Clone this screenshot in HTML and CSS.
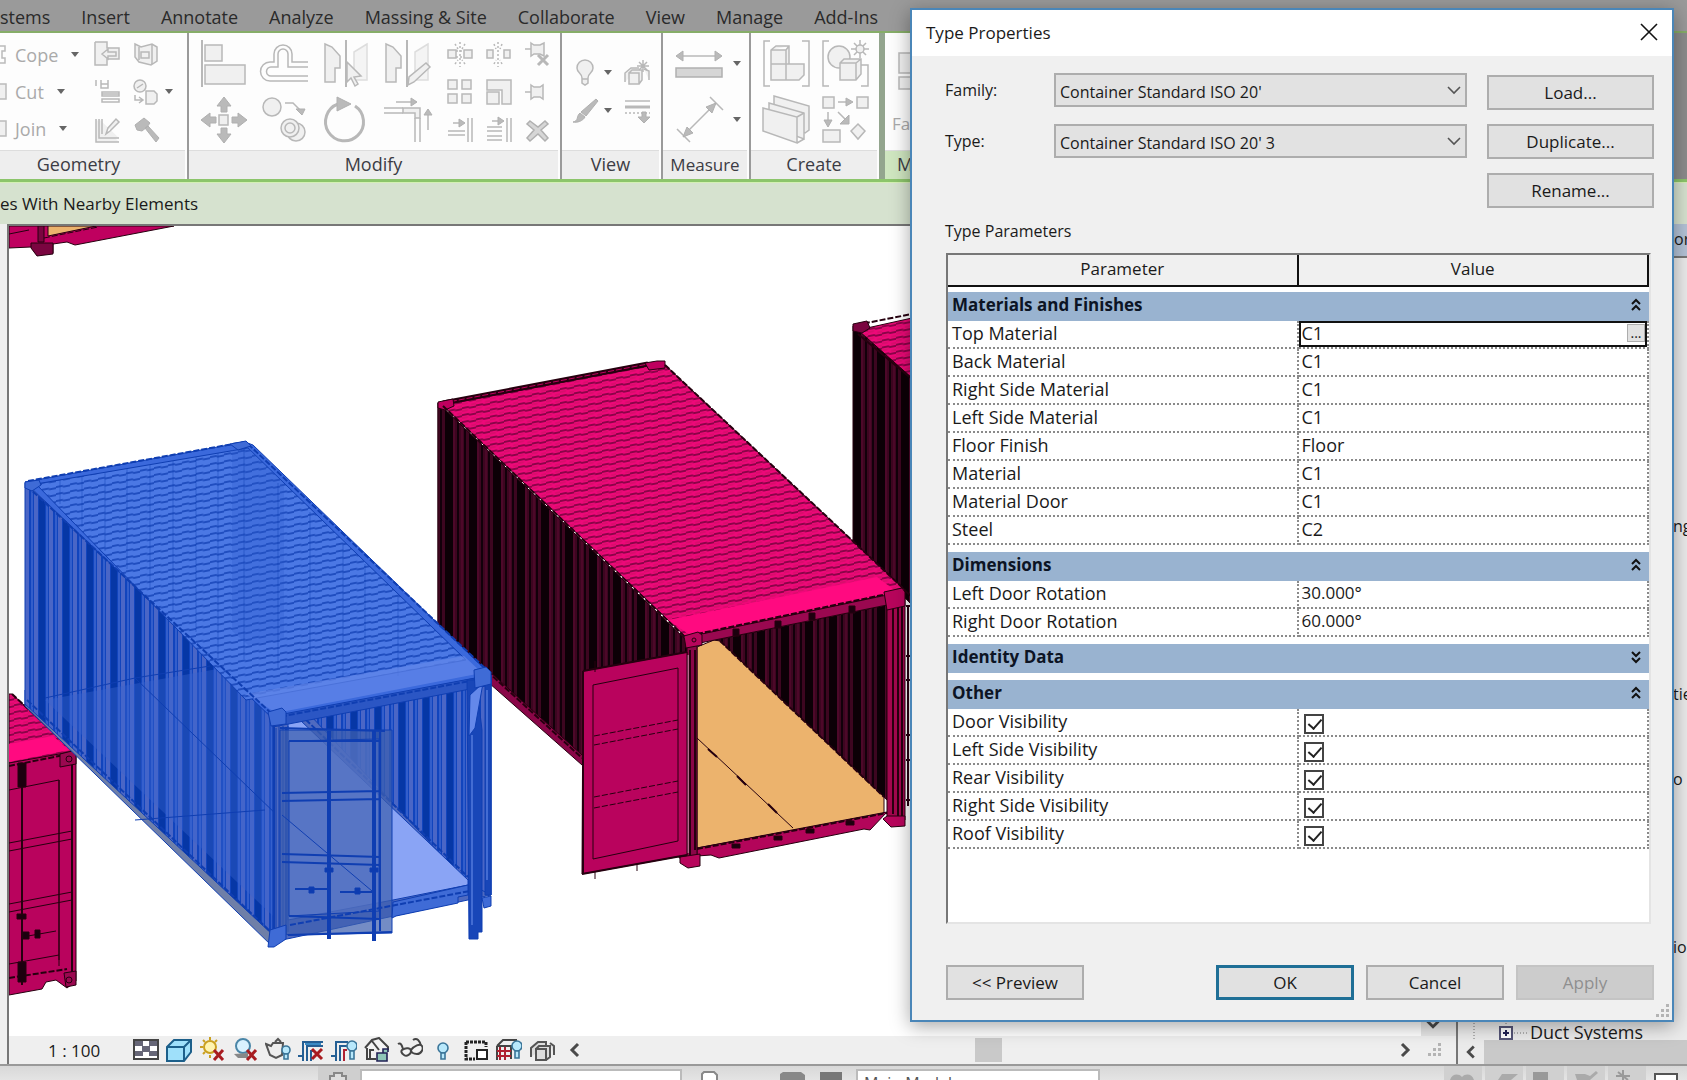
FILE: index.html
```
<!DOCTYPE html>
<html lang="en">
<head>
    <meta charset="UTF-8">
    <meta name="viewport" content="width=device-width, initial-scale=1.0">
    <title>Type Properties</title>
    <link rel="stylesheet" href="styles.css">
</head>
<body>
    <div class="app">
        <nav class="tabs">
            <a class="tab" href="#">stems</a>
            <a class="tab" href="#">Insert</a>
            <a class="tab" href="#">Annotate</a>
            <a class="tab" href="#">Analyze</a>
            <a class="tab" href="#">Massing &amp; Site</a>
            <a class="tab" href="#">Collaborate</a>
            <a class="tab" href="#">View</a>
            <a class="tab" href="#">Manage</a>
            <a class="tab" href="#">Add-Ins</a>
            <a class="tab" href="#">Modify</a>
        </nav>

        <div class="ribbon">
            <section class="panel geometry">
                <div class="tools">
                    <div class="text-tools">
                        <button class="tool"><svg width="8" height="25"><path d="M0 4h5v5h-3v7h3v5H0"/></svg>Cope<i class="arrow"></i></button>
                        <button class="tool"><svg width="8" height="25"><path class="f" d="M0 5h6v15H0"/></svg>Cut<i class="arrow"></i></button>
                        <button class="tool"><svg width="8" height="25"><path class="f" d="M0 5h6v15H0"/></svg>Join<i class="arrow"></i></button>
                    </div>
                    <div class="icons small two">
                        <svg viewBox="0 0 26 26"><path class="f" d="M1 1h12v6h4M1 1v23h12v-6h12V7h-8"/><path class="f" d="M8 13l6-5v3h8v4h-8v3z"/></svg>
                        <svg viewBox="0 0 26 26"><path class="f" d="M2 3l6 3 11-3 5 3v14l-6 4-12-3-4-5zM6 6v13M19 4v19M8 11h8v6H8z"/></svg>
                        <svg viewBox="0 0 26 26"><path d="M7 1v8h7V1M7 5h7M2 1v6M8 13h17v4H8zM8 20h17v3H8zM8 15h17" /></svg>
                        <svg viewBox="0 0 26 26"><circle class="f" cx="7" cy="7" r="6"/><path class="f" d="M4 9l6-4M13 12h8l3 3v7l-3 3h-8z"/><path d="M2 16v5h7M6 18l4 3-4 3"/></svg>
                        <svg viewBox="0 0 26 26"><path class="f" d="M2 2v23h23M5 2v19h20M8 2v15M12 17l2-6L22 2l3 3-9 9z"/></svg>
                        <svg viewBox="0 0 26 26"><path class="g" d="M2 8l9-7 6 5-3 4-5 4-5-1zM12 11l3-2 11 12-3 4z"/></svg>
                    </div>
                    <i class="arrow"></i>
                </div>
                <div class="label">Geometry</div>
            </section>

            <section class="panel modify">
                <div class="tools">
                    <div class="icons big four">
                        <svg viewBox="0 0 46 48"><path d="M1 0v47" class="w"/><path class="f" d="M4 5h17v16H4zM4 25h40v19H4z"/></svg>
                        <svg viewBox="0 0 46 48"><path d="M46 22H30V14a9 9 0 0 0-18 0v8H8a9 9 0 0 0 0 19h38"/><path d="M46 27H26V14a5 5 0 0 0-10 0v13H9a4 4 0 0 0 0 9h37"/></svg>
                        <svg viewBox="0 0 46 48"><path class="f" d="M2 4l7 3 8 9v12h-5v14H2z"/><path d="M23 0v47" class="w"/><path class="p" d="M44 4L31 12v28h13z"/><path class="f" d="M24 22l14 14-7 1 4 7-3 2-4-8-4 4z"/></svg>
                        <svg viewBox="0 0 46 48"><path class="f" d="M2 4l7 3 8 9v12h-5v14H2z"/><path d="M23 0v47" class="w"/><path class="p" d="M44 4L31 12v28h13z"/><path class="f" d="M24 45l1-8 17-14 4 4-16 15z"/></svg>
                        <svg viewBox="0 0 46 48"><path class="g" d="M23 1l7 9h-4v6h-6v-6h-4zM23 47l7-9h-4v-6h-6v6h-4zM0 24l9-7v4h6v6H9v4zM46 24l-9-7v4h-6v6h6v4z"/><path class="f" d="M18 19h9v10h-9z"/></svg>
                        <svg viewBox="0 0 46 48"><circle class="f" cx="10" cy="11" r="9"/><circle class="f" cx="34" cy="36" r="9"/><circle class="f" cx="28" cy="32" r="9"/><circle cx="28" cy="32" r="5"/><path d="M23 7h8l8 8"/><path class="g" d="M34 13h9l-3 6z"/></svg>
                        <svg viewBox="0 0 46 48"><path class="ww" d="M32 10a19 19 0 1 1-17-2"/><path class="g" d="M14 1l14 7-14 7z"/></svg>
                        <svg viewBox="0 0 46 48"><path d="M0 12h19M0 17h19M12 6h20M31 46V22M36 46V22M44 34V18" /><path class="f" d="M19 12h17v10h-5v-5H19z"/><path class="g" d="M27 2l6 4-6 4zM40 19l4-6 4 6z"/></svg>
                    </div>
                    <div class="icons small three">
                        <svg viewBox="0 0 26 26"><path class="f" d="M1 9h8v8H1zM17 9h8v8h-8z"/><path class="d" d="M13 1v25M9 10h8M9 16h8M8 3l3 5M18 3l-3 5M8 23l3-4M18 23l-3-4"/></svg>
                        <svg viewBox="0 0 26 26"><path class="f" d="M1 9h6v8H1zM18 9h6v8h-6z"/><path class="d" d="M12 1v25M8 3l2 5M16 3l-2 5M8 23l2-4M16 23l-2-4"/></svg>
                        <svg viewBox="0 0 26 26"><path class="f" d="M6 2l3 2h6l4-2v13l-4-2H9l-3 2zM0 8h6"/><path class="ww" d="M13 14l10 10M23 14L13 24"/></svg>
                        <svg viewBox="0 0 26 26"><path class="f" d="M1 1h9v9H1zM15 1h9v9h-9zM1 15h9v9H1zM15 15h9v9h-9z"/></svg>
                        <svg viewBox="0 0 26 26"><path class="f" d="M1 1h24v24H16V11H1z"/><path class="f" d="M1 13h12v12H1z"/></svg>
                        <svg viewBox="0 0 26 26"><path class="f" d="M6 6l3 2h6l3-2v14l-3-2H9l-3 2zM0 13h6"/></svg>
                        <svg viewBox="0 0 26 26"><path d="M1 14h17M1 18h17M6 6h8M21 1v24M25 1v24"/><path class="g" d="M12 2l6 4-6 4z"/></svg>
                        <svg viewBox="0 0 26 26"><path d="M1 10h15M1 14h15M1 19h15M1 23h15M6 4h8M21 1v24M25 1v24"/><path class="g" d="M12 0l6 4-6 4z"/></svg>
                        <svg viewBox="0 0 26 26"><path class="g light" d="M5 4l8 6 7-6 3 3-7 6 7 8-3 3-7-7-8 7-3-3 7-8-7-6z"/></svg>
                    </div>
                </div>
                <div class="label">Modify</div>
            </section>

            <section class="panel view">
                <div class="tools">
                    <div class="icons small arrows">
                        <svg viewBox="0 0 26 26"><path class="f" d="M10 18c0-5-5-5-5-10a8 8 0 0 1 16 0c0 5-5 5-5 10v5l-3 2-3-2zM10 19h6"/></svg>
                        <i class="arrow"></i>
                        <svg viewBox="0 0 26 26"><path class="f" d="M5 13h10v11H5zM5 13l3-3h10v10l-3 4M1 22v-9l6-5h8M25 20v-9l-5-2"/><path d="M19 0v12M13 6h12M15 2l8 8M23 2l-8 8"/></svg>
                        <svg viewBox="0 0 26 26"><path class="g" d="M1 24c6-1 3-6 7-9l5 4c-2 4-8 6-12 5zM9 14L24 1l2 2-12 15z"/></svg>
                        <i class="arrow"></i>
                        <svg viewBox="0 0 26 26"><path d="M1 3h25"/><path class="ww" d="M1 9h25"/><path class="d" d="M1 15h25"/><path class="g" d="M18 14h4v5h4l-6 6-6-6h4z"/></svg>
                    </div>
                </div>
                <div class="label">View</div>
            </section>

            <section class="panel measure">
                <div class="tools">
                    <div class="icons big arrows2">
                        <svg viewBox="0 0 46 48"><path d="M3 16h40"/><path class="g" d="M0 16l7-5v10zM46 16l-7-5v10z"/><path class="g light" d="M0 28h46v9H0z"/></svg>
                        <i class="arrow"></i>
                        <svg viewBox="0 0 46 48"><path d="M9 38l28-28M34 1l13 13M1 33l13 13"/><path class="g" d="M40 7l-10 4 6 6zM7 41l10-4-6-6z"/></svg>
                        <i class="arrow"></i>
                    </div>
                </div>
                <div class="label">Measure</div>
            </section>

            <section class="panel create">
                <div class="tools">
                    <div class="icons big two-wide">
                        <svg viewBox="0 0 46 48"><path d="M7 1H1v45h6M39 1h7v45h-7"/><path class="f" d="M8 10l5-4h13v18h15v11l-5 5H8zM8 24h18M23 10v30M8 10h15l3-4"/></svg>
                        <svg viewBox="0 0 46 48"><path d="M7 1H1v45h6M39 25h7v21h-7"/><circle class="f" cx="17" cy="17" r="11"/><path class="f" d="M18 23l4-4h17v15l-5 6H18zM18 23h16v17M34 23l5-4"/><path d="M38 0v18M29 9h18M32 3l12 12M44 3L32 15"/><circle class="f" cx="38" cy="9" r="4"/></svg>
                        <svg viewBox="0 0 46 48"><path class="f" d="M11 0l35 10v24l-4 3L11 26z"/><path class="f" d="M6 7l35 10v26L6 30z"/><path class="f" d="M0 12l34 9v26L0 35zM34 21l7-4M34 47l7-4"/></svg>
                        <svg viewBox="0 0 46 48"><path class="f" d="M1 1h11v11H1zM35 1h11v11H35zM1 34h17v12H1zM36 28l7 7-7 8-7-8z"/><path d="M16 6h10M6 16v10M16 16l9 9"/><path class="g" d="M24 2l7 4-7 4zM2 24h8l-4 7zM27 19v9h-9z"/></svg>
                    </div>
                </div>
                <div class="label">Create</div>
            </section>
            <section class="panel mode">
                <div class="tools">
                    <div class="icons big mode-icons">
                        <svg viewBox="0 0 46 48"><path class="f" d="M1 5h30v20H1zM1 29h30v12H1z"/></svg>
                        <span>Family</span>
                    </div>
                </div>
                <div class="label">Mode</div>
            </section>
        </div>

        <div class="options-bar">es With Nearby Elements</div>

        <div class="workspace">
            <main class="drawing">
                <div class="canvas-row">
                    <div class="canvas">
                        <svg class="scene" viewBox="9 226 903 811" width="903" height="811">
                            <defs>
                                <pattern id="roofPink" width="14" height="7" patternUnits="userSpaceOnUse" patternTransform="skewY(-11)">
                                    <rect width="14" height="7" fill="#ee0879"/>
                                    <path d="M0 1h7M7 2h7" stroke="#6b0238" stroke-width="1.4"/>
                                    <path d="M0 4h6M9 6h5" stroke="#c4145f"/>
                                </pattern>
                                <pattern id="roofBlue" width="14" height="7" patternUnits="userSpaceOnUse" patternTransform="skewY(-11)">
                                    <rect width="14" height="7" fill="#4b78e4"/>
                                    <path d="M0 1h7M7 2h7" stroke="#1240b4" stroke-width="1.4"/>
                                </pattern>
                                <pattern id="ribPink" width="24" height="20" patternUnits="userSpaceOnUse">
                                    <rect width="24" height="20" fill="#3d0620"/>
                                    <path d="M2 0v20M9 0v20" stroke="#12000a" stroke-width="2"/>
                                    <path d="M17 0v20" stroke="#0c0006" stroke-width="8"/>
                                    <path d="M22 0v20M6 0v20" stroke="#5d0a32"/>
                                </pattern>
                                <pattern id="ribBlue" width="24" height="20" patternUnits="userSpaceOnUse">
                                    <rect width="24" height="20" fill="#1144bd"/>
                                    <path d="M3 0v20M12 0v20" stroke="#4a66c6" stroke-width="4"/>
                                    <path d="M18 0v20" stroke="#0637a6" stroke-width="6"/>
                                    <path d="M8 0v20M23 0v20" stroke="#5478da"/>
                                </pattern>
                            </defs>

                            <!-- far left, cut by the view edge -->
                            <g class="edge">
                                <path fill="#bf005f" d="M9 226H174L75 245l-8-3-14 2V253l-16 2-6-8-22 1z"/>
                                <path fill="#ecb36d" d="M48 226H96L48 236z"/>
                                <path fill="#7a0540" d="M31 243h22v11l-16 2-6-8zM38 226h6v16h-6z"/>
                                <path class="dash" d="M44 238l54-11"/>
                                <path d="M9 234l20-4"/>
                            </g>

                            <!-- right container -->
                            <g class="edge">
                                <path fill="url(#ribPink)" d="M853 326L912 377V605L853 545z"/>
                                <path fill="url(#roofPink)" d="M858 330l54-12v60z"/>
                                <path class="bold dash" d="M856 325l56-11"/>
                                <path fill="#7a0540" d="M853 324l14-3 3 7-8 5-9-2z"/>
                                <path class="bold" d="M858 334l54 45M858 547l54 50"/>
                                <path class="bold" d="M906 606h6M906 656h6M906 680h6M906 735h6M906 760h6M906 800h6M908 606v200"/>
                            </g>

                            <!-- middle container -->
                            <g class="edge">
                                <path fill="#8a0648" d="M438 403v235l144 127 105 100V641z"/>
                                <path fill="url(#ribPink)" d="M438 403v222l144 130 105 100V641z"/>
                                <path class="bold dash" d="M440 628l142 130"/>
                                <path fill="url(#roofPink)" d="M442 405L663 363l242 227-216 50z"/>
                                <path fill="#ff0a80" stroke="none" d="M668 620l209-43 20 15-207 43z"/>
                                <path class="heavy" d="M443 403l205-39"/>
                                <path stroke="#bf005f" class="dash" d="M443 403l205-39"/>
                                <path fill="#bf005f" d="M438 402l15-3 1 7-9 4-7-2zM645 363l12-2h8v7l-16 2z"/>
                                <path class="bold dash" d="M443 406L688 640M665 365L905 590"/>
                                <path fill="url(#ribPink)" d="M715 640l172-35v195z"/>
                                <path fill="#ecb36d" d="M697 647l17-7 6 1 164 156v17l-187 34z"/>
                                <path class="bold dash" d="M720 641l164 156"/>
                                <path d="M697 738l96 90"/>
                                <path class="bold" d="M708 749l9 8M737 776l9 9M768 804l9 9"/>
                                <path fill="#9a0850" d="M697 635l190-40v10l-187 38z"/>
                                <path class="bold dash" d="M697 634l190-40"/>
                                <path fill="#1c000e" d="M733 629h6v7h-6zM775 621h6v7h-6zM809 613h6v7h-6zM849 606h6v7h-6z"/>
                                <path fill="#a3074f" d="M887 593h18v227h-18z"/>
                                <path class="bold" d="M893 606v208M902 600v218M898 600v216"/>
                                <path fill="#b8055c" d="M884 592l18-4 3 4v14l-18 4zM887 816h18v10l-14 1-8-8z"/>
                                <path fill="#b3055a" d="M697 848l190-36-17 18-6-1-145 29-8-3-14 1z"/>
                                <path class="bold dash" d="M697 849l190-36"/>
                                <path fill="#1c000e" d="M732 844h8v4h-8zM774 836h8v4h-8zM806 829h8v4h-8zM846 821h8v4h-8z"/>
                                <path fill="#8a0648" d="M687 641h10v216h-10z"/>
                                <path class="bold" d="M690 650v205M695 650v200"/>
                                <path stroke="#e6c9d6" d="M688 655v198"/>
                                <path fill="#b8055c" d="M684 636l14-4 4 3v10l-16 3zM680 857l20-3v12l-12 2-8-5z"/>
                                <circle cx="694" cy="640" r="2"/>
                                <path fill="#b9035d" d="M583 671l104-19v203l-105 19z"/>
                                <path class="bold" d="M583 671v203M583 671l104-19M582 874l105-19"/>
                                <path d="M593 685l85-17v173l-85 18z"/>
                                <path class="dash" d="M594 736l84-16M594 745l84-16M594 797l84-16M594 808l84-16"/>
                                <path d="M595 661v11M595 872v7M637 864v7"/>
                            </g>

                            <!-- bottom left container -->
                            <g class="edge">
                                <path fill="url(#roofPink)" d="M9 694l3 0 65 60-68 13z"/>
                                <path fill="#ff0a80" stroke="none" d="M9 744l44-8 16 14-60 12z"/>
                                <path class="bold dash" d="M12 694l64 59"/>
                                <path fill="#b9035d" d="M9 763l67-12v230l-9 7-11-8-10 2-4 7-33 6z"/>
                                <path class="bold" d="M22 763v222M72 763v214"/>
                                <path class="bold dash" d="M9 766l60-12M9 978l58-9"/>
                                <path d="M9 790l50-10v186M9 843l63-12M9 851l63-12M9 904l63-12M9 912l63-12M9 964l50-9M59 780v180M28 936l28-5"/>
                                <path fill="#1c000e" d="M18 763h8v24h-8zM18 962h8v20h-8zM17 914h9v5h-9zM23 932h6v7h-6zM35 930h5v8h-5z"/>
                                <path fill="#9a0850" d="M60 754l16-4v14l-16 3zM64 973l12-2v14l-10 2z"/>
                                <circle cx="69" cy="759" r="3"/>
                                <circle cx="69" cy="980" r="3"/>
                            </g>

                            <!-- selected container -->
                            <g class="edge sel">
                                <path fill="#6f7fa8" d="M25 706L273 947v-18L25 690z"/>
                                <path fill="url(#ribBlue)" d="M25 483v221L273 935V716z"/>
                                <path fill="#3a64d0" fill-opacity=".4" stroke="none" d="M45 700l200-36 28 52v200z"/>
                                <path d="M135 678l145 140M45 698l90-20 75-12M135 820l130-10"/>
                                <path class="bold dash" d="M27 700l246 234"/>
                                <path fill="#4f6ac0" d="M273 716l218-41v220l-218 47z"/>
                                <path fill="url(#ribBlue)" d="M310 715l181-36v216l-23-12z"/>
                                <path fill="#8aa4f5" d="M288 722l12-2 168 160v5l-75 15-105 20z"/>
                                <path class="bold dash" d="M300 714l168 163"/>
                                <path fill="#3b69dc" d="M25 482l220-40 8 3 238 230-218 44z"/>
                                <path fill="url(#roofBlue)" d="M36 484l212-36 218 212-220 40z"/>
                                <path fill="#2b58cc" fill-opacity=".28" stroke="none" d="M232 450l16-3 36 36v156l-36 6-16-14z"/>
                                <path class="thin" d="M60 480v24M82 477v50M105 473v78M127 469v100M150 465v125M173 461v150M196 457v175M218 453v205M244 449v210M278 483v185M310 512v150M343 543v135M365 564v110M398 596v80"/>
                                <path fill="#6488ea" stroke="none" fill-opacity=".7" d="M246 694l218-38 18 17-206 40z"/>
                                <path class="bold dash" d="M27 486l245 228M248 444l242 229M28 481l216-39"/>
                                <path fill="#2b56c4" d="M273 716l218-41v10l-218 42z"/>
                                <path class="bold dash" d="M273 718l218-41"/>
                                <path d="M276 728v212M283 726v212M288 726v206M279 726v214"/>
                                <path class="bold" d="M274 722v220M286 727v206"/>
                                <path fill="#3f5fae" fill-opacity=".72" d="M280 730h112v203l-104 2-8-5z"/>
                                <path fill="#5b78c8" fill-opacity=".5" d="M289 741l90-2v172l-90 5z"/>
                                <path class="wide" d="M329 731v208M374 731v210"/>
                                <path class="bold" d="M380 731v200M280 728l105 3M282 793l98-2M282 801l98-2M282 854l98 3M282 862l98 3M289 741h90M289 916l90 3M295 889h34M340 892h32M288 935l104-3"/>
                                <path fill="#0d3bb0" d="M325 868h8v4h-8zM370 868h8v4h-8zM309 887h5v6h-5zM355 888h5v6h-5z"/>
                                <path d="M282 815l90 76"/>
                                <path fill="#3f6bd6" d="M393 902l75-17v10l-10 2v6l-62 13-4 2z"/>
                                <path class="bold dash" d="M290 925l180-34"/>
                                <path fill="#1846b8" d="M467 680h9l6 50v202h-4v7h-9zM485 680h6v215h-6z"/>
                                <path stroke="#6f92ee" d="M472 735v190M487 690v190"/>
                                <path fill="#6488ea" d="M470 695l13-12-8 45-6 8z"/>
                                <path fill="#3f6bd6" d="M268 712l14-4 4 4v12l-15 2zM270 930l16-5v14l-12 8h-6zM474 670l12-3 5 5v12l-16 4zM482 898l9-2v10l-7 2zM230 444l16-3 5 5-13 4zM25 482l14-2 2 5-9 6-7-3z"/>
                            </g>
                        </svg>
                    </div>
                    <div class="vscroll"><svg viewBox="0 0 26 26" width="24" height="24"><path class="chev" d="M7 10l6 6 6-6"/></svg></div>
                </div>
                <div class="view-bar">
                    <span class="scale">1 : 100</span>
                    <div class="view-icons">
                        <svg viewBox="0 0 26 26"><path fill="#fff" stroke="#444" stroke-width="2" d="M1 3h24v19H1z"/><path fill="#667" d="M2 4h8v5H2zM16 4h8v5h-8zM9 9h8v6H9zM2 14h8v5H2zM16 14h8v5h-8z"/></svg>
                        <svg viewBox="0 0 26 26"><path fill="#9fe0fa" stroke="#1c5f8a" stroke-width="2" d="M1 10l7-7h17v12l-7 9H1zM1 10h17v14M18 10l7-7"/></svg>
                        <svg viewBox="0 0 26 26"><circle cx="11" cy="10" r="6" fill="#fff4b0" stroke="#caa020" stroke-width="2"/><path stroke="#caa020" stroke-width="2" d="M11 0v3M1 10h3M4 3l2 2M18 3l-2 2M4 17l2-2M11 18v3"/><path class="x" d="M15 13l9 10M24 13l-9 10"/></svg>
                        <svg viewBox="0 0 26 26"><circle cx="11" cy="9" r="7" fill="#d8f2ff" stroke="#4a86a8" stroke-width="2"/><path fill="#888" d="M2 17l14-1v5H6z"/><path class="x" d="M15 13l9 10M24 13l-9 10"/></svg>
                        <svg viewBox="0 0 26 26"><path fill="#eee" stroke="#555" stroke-width="2" d="M1 7l5 2 2-3h10l-1 12-6 3-6-3zM10 5l3-3 3 3"/><circle cx="21" cy="13" r="4" class="lamp"/><path class="lamp" d="M19 17h4v5h-4z"/></svg>
                        <svg viewBox="0 0 26 26"><path fill="none" stroke="#245f94" stroke-width="2" d="M5 24V5h20M9 24V9h16M13 24V14h3M0 19h4"/><path stroke="#3a8ac4" stroke-width="2" d="M7 7h16"/><path class="x" d="M14 12l10 10M24 12L14 22"/></svg>
                        <svg viewBox="0 0 26 26"><path fill="none" stroke="#245f94" stroke-width="2" d="M5 24V5h12M9 24V9h7M0 19h4"/><path fill="none" stroke="#b02030" stroke-width="2" d="M13 24V13h3"/><circle cx="21" cy="9" r="5" class="lamp"/><path class="lamp" d="M19 14h4v8h-4z"/></svg>
                        <svg viewBox="0 0 26 26"><path fill="#f4f4f4" stroke="#444" stroke-width="2" d="M1 11l7-8 7-2 9 9v3M3 11v11h9M8 4l7 9M6 22v-9h4"/><path fill="#8fc7b8" stroke="#225" stroke-width="1.6" d="M13 16h10v8H13zM19 16v-4h5v3"/></svg>
                        <svg viewBox="0 0 26 26"><path fill="none" stroke="#444" stroke-width="2" d="M1 7c3-2 4 2 5 5M16 3c4-3 7 1 8 6"/><path fill="#f4f4f4" stroke="#444" stroke-width="2" d="M5 13c4-3 9-2 9 1s-4 6-7 4-3-4-2-5zM14 13c3-4 9-7 11-4s-1 8-5 8-6-2-6-4z"/></svg>
                        <svg viewBox="0 0 26 26"><circle cx="13" cy="11" r="5" class="lamp"/><path class="lamp" d="M11 16h4v6h-4z"/></svg>
                        <svg viewBox="0 0 26 26"><path fill="none" stroke="#222" stroke-width="3" stroke-dasharray="3 1" d="M3 5h20M3 5v17h9M23 5v5"/><path fill="#fff" stroke="#222" stroke-width="2" d="M14 13h10v9H14z"/><circle cx="19" cy="17" r="2"/></svg>
                        <svg viewBox="0 0 26 26"><path fill="none" stroke="#444" stroke-width="2" d="M1 9l6-6h14M1 9h14v13M1 9v14"/><path fill="none" stroke="#b02030" stroke-width="2" d="M4 10v13M9 10v13M1 14h14M1 19h14"/><circle cx="21" cy="9" r="5" class="lamp"/><path class="lamp" d="M19 14h4v7h-4z"/></svg>
                        <svg viewBox="0 0 26 26"><path fill="#ddd" stroke="#555" stroke-width="2" d="M7 12h10v11H7zM7 12l3-3h11v11l-4 3M2 20v-9l7-6h8v4M25 18v-9l-4-3"/></svg>
                        <svg viewBox="0 0 26 26"><path class="chev" d="M16 7l-6 6 6 6"/></svg>
                    </div>
                    <div class="hscroll"><div class="thumb"></div></div>
                    <svg class="end-arrow" viewBox="0 0 26 26"><path class="chev" d="M10 7l6 6-6 6"/></svg>
                    <svg class="grip" viewBox="0 0 14 14"><path d="M10 0h3v3h-3zM5 5h3v3H5zM10 5h3v3h-3zM0 10h3v3H0zM5 10h3v3H5zM10 10h3v3h-3z"/></svg>
                </div>
            </main>

            <aside class="browser">
                <div class="browser-title">or</div>
                <ul class="tree">
                    <li>ng</li>
                    <li>tie</li>
                    <li>o</li>
                    <li>io</li>
                    <li class="node"><svg width="66" height="22" viewBox="0 0 66 22"><path stroke="#777" stroke-dasharray="1 2" fill="none" d="M10 0v22M42 0v6M50 13h14"/><path fill="#fff" stroke="#557" stroke-width="2" d="M36 7h12v12H36z"/><path stroke="#225" stroke-width="2" d="M39 13h6M42 10v6"/></svg>Duct Systems</li>
                </ul>
                <div class="tree-scroll">
                    <svg viewBox="0 0 26 26" width="26" height="24"><path class="chev" d="M16 7l-6 6 6 6"/></svg>
                    <div class="thumb"></div>
                </div>
            </aside>
        </div>

        <footer class="status">
            <div class="message"></div>
            <svg class="worksets" width="42" height="14"><path fill="#ddd" stroke="#888" stroke-width="2" d="M12 14v-4h4V7h8v3h4v4"/></svg>
            <div class="field workset"></div>
            <svg width="90" height="14"><path fill="#fff" stroke="#888" stroke-width="2" d="M20 14V8l2-2h10l3 3v5"/></svg>
            <svg width="40" height="14"><path fill="#888" d="M8 14V8l3-2h18l4 3v5z"/></svg>
            <svg width="44" height="14"><path fill="#777" d="M8 6h22v8H8z"/></svg>
            <div class="field model">Main Model</div>
            <div class="fill"></div>
            <svg class="sel-icon" width="38" height="14"><path fill="#aaa" d="M6 14c2-6 8-7 12-3 4-4 10-3 12 3z"/></svg>
            <svg class="sel-icon" width="38" height="14"><path fill="#aaa" d="M13 14l4-6h16l-7 6z"/></svg>
            <svg class="sel-icon" width="38" height="14"><path fill="#999" d="M7 6h15v8H7z"/></svg>
            <svg class="sel-icon" width="38" height="14"><path fill="#aaa" d="M8 8h10l5 2 6-5 2 2-8 7H10z"/></svg>
            <svg class="sel-icon" width="38" height="14"><path stroke="#999" stroke-width="2" d="M15 4v10M8 10h14M10 6l10 8"/></svg>
            <svg class="filter" width="38" height="14"><path fill="#fff" stroke="#555" stroke-width="2" d="M6 14V8h22v6"/></svg>
        </footer>
    </div>

    <div class="dialog" role="dialog" aria-labelledby="dlgTitle">
        <div class="titlebar">
            <h1 id="dlgTitle">Type Properties</h1>
            <button class="close" aria-label="Close"><svg width="18" height="18" viewBox="0 0 18 18"><path stroke="#111" stroke-width="1.6" d="M1 1l16 16M17 1L1 17"/></svg></button>
        </div>
        <div class="dialog-body">
            <div class="top">
                <div class="pickers">
                    <label for="family">Family:</label>
                    <div class="select">
                        <select id="family"><option>Container Standard ISO 20'</option></select>
                        <svg width="14" height="9" viewBox="0 0 14 9"><path d="M1 1l6 6 6-6"/></svg>
                    </div>
                    <label for="type">Type:</label>
                    <div class="select">
                        <select id="type"><option>Container Standard ISO 20' 3</option></select>
                        <svg width="14" height="9" viewBox="0 0 14 9"><path d="M1 1l6 6 6-6"/></svg>
                    </div>
                </div>
                <div class="side-buttons">
                    <button class="btn">Load...</button>
                    <button class="btn">Duplicate...</button>
                    <button class="btn">Rename...</button>
                </div>
            </div>
            <h2>Type Parameters</h2>
            <div class="grid">
                <table>
                    <thead>
                        <tr><th>Parameter</th><th>Value</th></tr>
                    </thead>
                    <tbody>
                        <tr class="gap"><td colspan="2"></td></tr>
                        <tr class="group"><th colspan="2"><div><span>Materials and Finishes</span><button aria-label="Collapse"><svg width="10" height="14" viewBox="0 0 10 14"><path d="M1 6l4-4 4 4M1 12l4-4 4 4"/></svg></button></div></th></tr>
                        <tr><td><label for="top">Top Material</label></td><td class="editing"><div><input id="top" type="text" value="C1"><button aria-label="Browse">...</button></div></td></tr>
                        <tr><td>Back Material</td><td>C1</td></tr>
                        <tr><td>Right Side Material</td><td>C1</td></tr>
                        <tr><td>Left Side Material</td><td>C1</td></tr>
                        <tr><td>Floor Finish</td><td>Floor</td></tr>
                        <tr><td>Material</td><td>C1</td></tr>
                        <tr><td>Material Door</td><td>C1</td></tr>
                        <tr><td>Steel</td><td>C2</td></tr>
                        <tr class="gap"><td colspan="2"></td></tr>
                        <tr class="group"><th colspan="2"><div><span>Dimensions</span><button aria-label="Collapse"><svg width="10" height="14" viewBox="0 0 10 14"><path d="M1 6l4-4 4 4M1 12l4-4 4 4"/></svg></button></div></th></tr>
                        <tr><td>Left Door Rotation</td><td class="number">30.000°</td></tr>
                        <tr><td>Right Door Rotation</td><td class="number">60.000°</td></tr>
                        <tr class="gap"><td colspan="2"></td></tr>
                        <tr class="group"><th colspan="2"><div><span>Identity Data</span><button aria-label="Expand"><svg width="10" height="14" viewBox="0 0 10 14"><path d="M1 2l4 4 4-4M1 8l4 4 4-4"/></svg></button></div></th></tr>
                        <tr class="gap"><td colspan="2"></td></tr>
                        <tr class="group"><th colspan="2"><div><span>Other</span><button aria-label="Collapse"><svg width="10" height="14" viewBox="0 0 10 14"><path d="M1 6l4-4 4 4M1 12l4-4 4 4"/></svg></button></div></th></tr>
                        <tr><td><label for="v1">Door Visibility</label></td><td><input id="v1" type="checkbox" checked></td></tr>
                        <tr><td><label for="v2">Left Side Visibility</label></td><td><input id="v2" type="checkbox" checked></td></tr>
                        <tr><td><label for="v3">Rear Visibility</label></td><td><input id="v3" type="checkbox" checked></td></tr>
                        <tr><td><label for="v4">Right Side Visibility</label></td><td><input id="v4" type="checkbox" checked></td></tr>
                        <tr><td><label for="v5">Roof Visibility</label></td><td><input id="v5" type="checkbox" checked></td></tr>
                    </tbody>
                </table>
            </div>
            <div class="actions">
                <button class="btn preview">&lt;&lt; Preview</button>
                <button class="btn ok">OK</button>
                <button class="btn">Cancel</button>
                <button class="btn" disabled>Apply</button>
            </div>
        </div>
        <svg class="grip corner" viewBox="0 0 14 14"><path d="M10 0h3v3h-3zM5 5h3v3H5zM10 5h3v3h-3zM0 10h3v3H0zM5 10h3v3H5zM10 10h3v3h-3z"/></svg>
    </div>
</body>
</html>
```

FILE: styles.css
```
* { box-sizing: border-box; }
body { margin: 0; font-family: "Open Sans", "Noto Sans", sans-serif; font-size: 17px; color: #1a1a1a; overflow: hidden; }
button, select, input { font: inherit; color: inherit; }
button { padding: 0; border: none; background: none; }
svg { display: block; flex: none; }
.app { display: flex; flex-direction: column; height: 100vh; background: #efefef; }

/* ribbon */
.tabs { display: flex; gap: 31px; height: 33px; line-height: 34px; font-size: 18px; background: #9a9a9a; border-bottom: 2px solid #86ad68; white-space: nowrap; flex: none; }
.tab { color: #2a2a2a; text-decoration: none; }
.ribbon { display: flex; height: 149px; background: #8c8c8c; border-bottom: 3px solid #8cc56b; flex: none; }
.panel { display: flex; flex-direction: column; background: #fdfdfd; border-right: 2px solid #9a9a9a; flex: none; }
.tools { display: flex; flex: 1; color: #aaa; }
.label { height: 29px; line-height: 27px; margin-right: 2px; text-align: center; font-size: 18px; background: #eee; border-top: 1px solid #ddd; color: #3c3c44; }
.geometry { width: 189px; }
.geometry .label { padding-right: 28px; }
.modify { width: 373px; }
.view { width: 101px; }
.measure { width: 88px; }
.measure .label { font-size: 17px; }
.create { width: 134px; border-right: 6px solid #93a58e; }
.mode { width: 120px; border-right: none; }
.mode .label { background: #cfe6c0; text-align: left; padding-left: 12px; }
.mode-icons { padding-left: 13px; gap: 16px; color: #aaa; }
.mode-icons span { margin-left: -6px; }
.text-tools { display: flex; flex-direction: column; justify-content: space-around; width: 94px; padding: 3px 0; }
.tool { display: flex; align-items: center; gap: 7px; height: 34px; font-size: 18px; }
.arrow { width: 0; height: 0; border: 4px solid transparent; border-top: 5px solid #666; border-bottom: none; align-self: center; margin-left: 6px; }
.icons { display: grid; align-content: center; justify-content: start; }
.icons svg { fill: none; stroke: #b8b8b8; stroke-width: 1.5; overflow: visible; }
.icons .f, .tool .f { fill: #f0f0f0; }
.tool svg { fill: none; stroke: #bbb; stroke-width: 1.5; }
.icons .g { fill: #bababa; stroke: #b0b0b0; stroke-width: 1; }
.icons .light { fill: #d6d6d6; stroke-width: 1.5; }
.icons .p { fill: #f4f4f4; stroke: #ddd; }
.icons .w { stroke-width: 2; }
.icons .ww { stroke-width: 3; }
.icons .d { stroke-dasharray: 2 2; }
.small svg { width: 26px; height: 26px; }
.big svg { width: 46px; height: 48px; }
.two { grid-template-columns: 26px 26px; gap: 12px 13px; }
.four { grid-template-columns: repeat(4, 46px); gap: 8px 15px; padding-left: 12px; }
.three { grid-template-columns: repeat(3, 26px); gap: 12px 13px; padding-left: 17px; }
.view .icons { grid-template-columns: 26px 14px 26px; gap: 12px 6px; padding-left: 10px; }
.view .arrow { margin: 0; }
.arrows2 { grid-template-columns: 46px 12px; gap: 8px 11px; padding-left: 13px; }
.arrows2 .arrow { margin: 0; }
.two-wide { grid-template-columns: 46px 46px; gap: 8px 13px; padding-left: 12px; }
.options-bar { height: 42px; line-height: 41px; background: #d6e2cf; border-top: 1px solid #d4f0b4; flex: none; }

/* work area */
.workspace { display: flex; flex: 1; min-height: 0; border-bottom: 2px solid #999; }
.drawing { display: flex; flex-direction: column; flex: 1; min-width: 0; margin-left: 7px; border-top: 2px solid #777; border-left: 2px solid #777; }
.canvas-row { display: flex; flex: 1; min-height: 0; }
.canvas { flex: 1; min-width: 0; background: #fff; overflow: hidden; }
.vscroll { display: flex; align-items: flex-end; width: 35px; background: #e6e6e6; }
.scene { fill: none; }
.edge { stroke: #26000f; stroke-width: 1; }
.edge .bold { stroke-width: 2; }
.edge .wide { stroke-width: 4; }
.edge .heavy { stroke-width: 5; }
.edge .dash { stroke-dasharray: 6 2; }
.sel { stroke: #0f3eb2; }
.sel .thin { stroke-opacity: .45; }
.view-bar { display: flex; align-items: center; height: 28px; background: #efefef; flex: none; }
.scale { width: 124px; padding-left: 39px; white-space: nowrap; }
.view-icons { display: flex; gap: 7px; }
.view-icons svg, .end-arrow { width: 26px; height: 26px; fill: none; }
.view-icons .x { stroke: #a81c20; stroke-width: 3; }
.view-icons .lamp { fill: #b8e8fb; stroke: #3a7599; stroke-width: 1.6; }
.chev { fill: none; stroke: #4a4a4a; stroke-width: 3; }
.hscroll { flex: 1; display: flex; align-items: center; padding-left: 387px; }
.thumb { height: 24px; background: #c9c9c9; }
.hscroll .thumb { width: 27px; }
.grip { width: 14px; height: 14px; fill: #b4b4b4; margin: 0 14px 0 10px; }
.browser { display: flex; flex-direction: column; width: 231px; background: #ebebeb; border-left: 2px solid #777; overflow: hidden; flex: none; }
.browser-title { height: 34px; line-height: 30px; padding-left: 216px; font-size: 16px; background: #b3c2d6; border-bottom: 2px solid #777; flex: none; }
.tree { flex: 1; min-height: 0; margin: 0; padding: 0; list-style: none; overflow: hidden; font-size: 16px; line-height: 24px; }
.tree li { padding-left: 215px; margin-top: 61px; }
.tree li:nth-child(1) { margin-top: 256px; }
.tree li:nth-child(2) { margin-top: 144px; }
.tree li:nth-child(4) { margin-top: 144px; }
.tree .node { display: flex; padding-left: 6px; font-size: 18px; white-space: nowrap; }
.tree-scroll { display: flex; height: 24px; flex: none; }
.tree-scroll .thumb { flex: 1; }

/* status bar */
.status { display: flex; height: 14px; background: linear-gradient(#d8d8d8, #e4e4e4); overflow: hidden; flex: none; }
.message { width: 318px; flex: none; }
.worksets { background: #cfcfcf; }
.field { height: 14px; margin-top: 3px; background: #fff; border: 2px solid #bbb; border-bottom: none; flex: none; font-size: 16px; line-height: 24px; color: #555; padding-left: 6px; }
.workset { width: 322px; }
.model { width: 244px; }
.fill { flex: 1; }
.sel-icon { background: #d0d0d0; margin-right: 3px; }

/* type properties window */
.dialog { position: absolute; top: 8px; right: 13px; width: 764px; background: #f0f0f0; border: 2px solid #4a86b8; box-shadow: 0 4px 18px rgba(0, 0, 0, .35); }
.titlebar { display: flex; justify-content: space-between; height: 46px; padding: 0 14px; background: #fff; }
.titlebar h1 { margin: 0; font-size: 17px; line-height: 46px; font-weight: normal; }
.close { height: 44px; }
.dialog-body { padding: 17px 18px 20px 33px; }
.top { display: flex; gap: 20px; }
.pickers { display: grid; grid-template-columns: 109px 1fr; grid-auto-rows: 34px; row-gap: 17px; flex: 1; line-height: 34px; font-size: 16px; }
.select { position: relative; }
.select select { width: 100%; height: 34px; padding: 0 4px; appearance: none; background: #e2e2e2; border: 2px solid #adadad; border-radius: 0; }
.select svg { position: absolute; right: 6px; top: 13px; fill: none; stroke: #555; stroke-width: 1.6; pointer-events: none; }
.side-buttons { display: flex; flex-direction: column; gap: 14px; width: 167px; padding-top: 2px; }
.btn { height: 35px; line-height: 29px; background: #e1e1e1; border: 2px solid #adadad; }
.btn:disabled { background: #ccc; border-color: #c4c4c4; color: #8f8f8f; }
.dialog h2 { margin: 10px 0 9px; font-size: 16px; line-height: 26px; font-weight: normal; }
.grid { height: 671px; margin: 0 3px 0 1px; background: #fff; border: 2px solid #777; border-right-color: #e4e4e4; border-bottom-color: #e4e4e4; }
table { width: 100%; table-layout: fixed; border-collapse: separate; border-spacing: 0; line-height: 22px; }
td { height: 28px; padding: 1px 4px 3px; border-right: 2px dotted #8a8a8a; border-bottom: 2px dotted #8a8a8a; font-size: 18px; }
td + td { padding-left: 3px; }
td.number { font-size: 17px; }
thead th { height: 32px; padding: 0 0 2px; font-weight: normal; background: #f0f0f0; border-right: 2px solid #111; border-bottom: 2px solid #111; }
.gap td { height: 7px; padding: 0; border: none; }
thead + tbody .gap:first-child td { height: 5px; }
.group th { height: 29px; padding: 0 8px 3px 4px; background: #99b3d0; text-align: left; font-weight: bold; color: #0c1424; }
.group div { display: flex; justify-content: space-between; align-items: center; }
.group svg { fill: none; stroke: #111; stroke-width: 2; }
.group button { height: 14px; }
td.editing { padding: 0; }
.editing div { display: flex; align-items: flex-start; height: 26px; border: 2px solid #111; padding: 0 0 0 1px; }
.editing input { flex: 1; min-width: 0; height: 20px; line-height: 20px; padding: 0; border: none; background: none; outline: none; }
.editing button { width: 18px; height: 18px; margin-top: 1px; line-height: 12px; font-size: 14px; background: #e1e1e1; border: 1px solid #adadad; }
input[type=checkbox] { appearance: none; display: block; position: relative; width: 20px; height: 20px; margin: 4px 0 -2px 2px; border: 2px solid #444; background: #fff; }
input[type=checkbox]:checked::after { content: ""; position: absolute; left: 5px; top: 0; width: 6px; height: 11px; border: solid #222; border-width: 0 2px 2px 0; transform: rotate(42deg); }
.actions { display: flex; gap: 12px; margin-top: 41px; }
.actions .btn { width: 138px; }
.actions .preview { margin-right: auto; margin-left: 1px; }
.actions .ok { border: 3px solid #1f6f96; line-height: 27px; }
.corner { position: absolute; right: 2px; bottom: 2px; margin: 0; }
```
